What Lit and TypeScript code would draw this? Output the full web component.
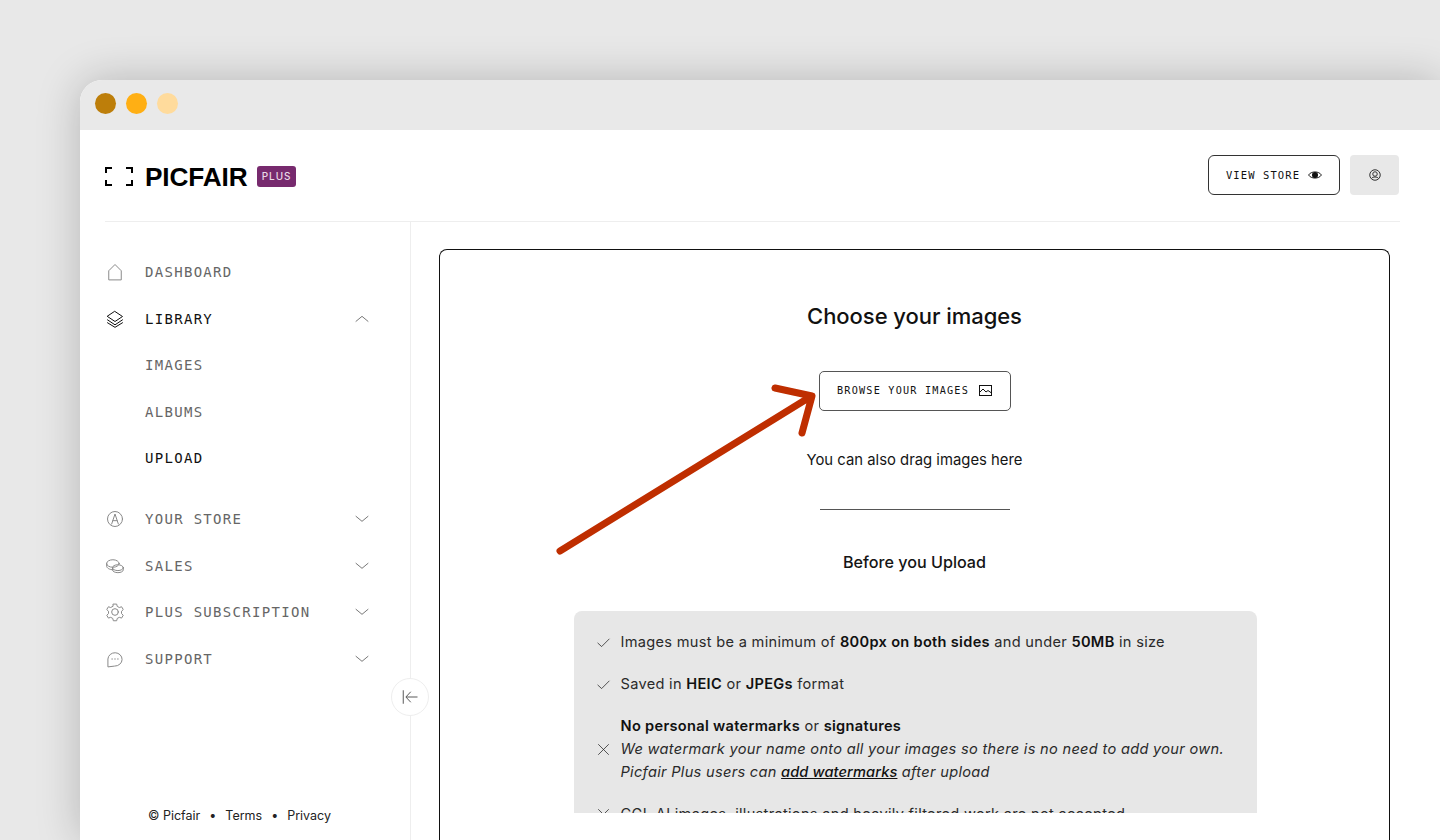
import { LitElement, html, css, svg } from "lit";
import { customElement } from "lit/decorators.js";

const ic = (body: unknown, size = 20, vb = 24) => html`<svg width=${size} height=${size} viewBox="0 0 ${vb} ${vb}" fill="none" stroke="currentColor" stroke-width="1.2" stroke-linecap="round" stroke-linejoin="round">${body}</svg>`;

const chevDown = ic(svg`<path d="M3 8 L12 15.500 L21 8"/>`, 16);
const chevUp = ic(svg`<path d="M3 15.500 L12 8 L21 15.500"/>`, 16);
const home = ic(svg`<path d="M4.500 21 V10.500 L12 3 L19.500 10.500 V21 Z"/>`, 20);
const layers = ic(svg`<path d="M12 3 L21 9 L12 15 L3 9 Z"/><path d="M3 13 L12 19 L21 13"/><path d="M3 16.500 L12 22 L21 16.500" />`, 20);
const store = ic(svg`<circle cx="12" cy="12" r="9"/><path d="M8 18 L12 6 L16 18"/><path d="M9.500 14 H14.500"/>`, 20);
const coins = ic(svg`<ellipse cx="9.500" cy="9" rx="7.500" ry="4.500"/><path d="M2 9 v3 c0 2.500 3.500 4.500 7.500 4.500"/><ellipse cx="15.500" cy="14" rx="6.500" ry="3.500"/><path d="M9 14 v2.500 c0 2 3 3.500 6.500 3.500 s6.500-1.500 6.500-3.500 V14"/>`, 20);
const gear = ic(svg`<circle cx="12" cy="12" r="4"/><path d="M10 2.500 h4 l.7 2.800 2.500 1.300 2.700-.9 2 3.400-2.100 2 v2.800 l2.100 2-2 3.400-2.700-.9-2.500 1.300-.7 2.800 h-4 l-.7-2.800-2.500-1.300-2.700.9-2-3.400 2.100-2 v-2.800 l-2.100-2 2-3.400 2.700.9 2.500-1.300 Z"/>`, 20);
const chat = ic(svg`<path d="M3.500 21 V12 a8.500 8 0 1 1 8.500 8.500 Z"/><path d="M8.500 12 h.01 M12 12 h.01 M15.500 12 h.01" stroke-width="1.600"/>`, 20);
const check = ic(svg`<path d="M3 13 L9 18.500 L21 6.500"/>`, 15);
const cross = ic(svg`<path d="M4 4 L20 20 M20 4 L4 20"/>`, 15);

interface NavItem { label: string; icon?: unknown; chev?: unknown; tone?: "on" | "off"; gap?: boolean; }

const NAV: NavItem[] = [
  { label: "DASHBOARD", icon: home },
  { label: "LIBRARY", icon: layers, chev: chevUp, tone: "on" },
  { label: "IMAGES" },
  { label: "ALBUMS" },
  { label: "UPLOAD", tone: "on" },
  { label: "YOUR STORE", icon: store, chev: chevDown, gap: true },
  { label: "SALES", icon: coins, chev: chevDown },
  { label: "PLUS SUBSCRIPTION", icon: gear, chev: chevDown },
  { label: "SUPPORT", icon: chat, chev: chevDown },
];

@customElement("app-root")
export class AppRoot extends LitElement {
  static styles = css`
    :host { display: block; width: 1440px; height: 840px; overflow: hidden; background: #e8e8e8; position: relative; font-family: "Inter", "Liberation Sans", sans-serif; color: #151515; }
    .stage { padding: 80px 0 0 80px; height: 840px; box-sizing: border-box; }
    .win { width: 1360px; height: 760px; background: #fff; border-radius: 22px 0 0 0; box-shadow: 0 0 44px rgba(0,0,0,.22); display: flex; flex-direction: column; overflow: hidden; }
    .bar { height: 50px; flex: none; background: #e9e9e9; display: flex; align-items: center; gap: 10px; padding: 0 0 3px 15px; box-sizing: border-box; }
    .dot { width: 21px; height: 21px; border-radius: 50%; }
    .d1 { background: #bd7e0a; } .d2 { background: #ffaf14; } .d3 { background: #ffdb9c; }
    .page { flex: 1; min-height: 0; padding: 0 40px 0 25px; display: flex; flex-direction: column; }
    header { height: 92px; flex: none; box-sizing: border-box; border-bottom: 1px solid #eeeeee; display: flex; align-items: center; }
    .logo { display: flex; align-items: center; margin-top: 3px; }
    .mark { display: block; margin-right: 12px; }
    .word { font: 700 26.200px/1 "Liberation Sans", sans-serif; color: #000; letter-spacing: -.1px; }
    .badge { margin-left: 9.500px; background: #772a6e; color: #e9d9e6; font: 500 10px/21px "Inter", sans-serif; letter-spacing: 1px; width: 39px; text-align: center; border-radius: 3px; }
    .tools { margin-left: auto; display: flex; gap: 10px; margin-right: 1px; margin-top: -2px; }
    .btn { font-family: "DejaVu Sans Mono", monospace; background: #fff; border: 1px solid #333; border-radius: 6px; display: flex; align-items: center; justify-content: center; box-sizing: border-box; color: #111; }
    .view { width: 132px; height: 40px; font-size: 10.500px; letter-spacing: 1.100px; gap: 8px; }
    .user { width: 49px; height: 40px; background: #e8e8e8; border-radius: 4px; display: flex; align-items: center; justify-content: center; color: #333; }
    .body { flex: 1; min-height: 0; display: flex; }
    aside { width: 306px; flex: none; box-sizing: border-box; border-right: 1px solid #eeeeee; padding-top: 27.200px; position: relative; display: flex; flex-direction: column; }
    .row { height: 46.500px; display: flex; align-items: center; color: #666; font: 400 14px/1 "DejaVu Sans Mono", monospace; letter-spacing: 1.300px; }
    .row.gap { margin-top: 14.500px; }
    .row.on { color: #111; }
    .ico { width: 40px; flex: none; display: flex; align-items: center; color: #8a8a8a; }
    .row.on .ico { color: #111; }
    .chev { margin-left: auto; margin-right: 40px; display: flex; color: #555; }
    .foot { margin-top: auto; margin-bottom: 14px; display: flex; justify-content: center; align-items: center; gap: 9px; font-size: 12.500px; line-height: 20px; color: #222; padding-right: 36px; }
    .collapse { position: absolute; right: -19px; top: 456px; width: 38px; height: 38px; border: 1px solid #eeeeee; background: #fff; border-radius: 50%; box-sizing: border-box; display: flex; align-items: center; justify-content: center; color: #555; }
    main { flex: 1; min-width: 0; padding: 27px 10px 0 28px; }
    .card { border: 1px solid #111; border-bottom: none; border-radius: 8px 8px 0 0; height: 100%; box-sizing: border-box; padding-top: 49px; display: flex; flex-direction: column; align-items: center; }
    h1 { margin: 0; font-size: 22px; line-height: 34px; font-weight: 500; letter-spacing: -.05px; color: #111; }
    .browse { margin-top: 38px; width: 192px; height: 39.500px; font-size: 10.200px; letter-spacing: 1.200px; gap: 10px; border-radius: 5px; border-color: #555; }
    .drag { margin: 38.500px 0 0; font-size: 14.850px; line-height: 22px; }
    .rule { margin-top: 38px; width: 190px; height: 1px; background: #555; }
    h2 { margin: 40px 0 0; font-size: 16.150px; line-height: 24px; font-weight: 500; }
    .rules { margin: 37px 0 0 1px; width: 683px; height: 202px; flex: none; overflow: hidden; background: #e7e7e7; border-radius: 8px 8px 0 0; box-sizing: border-box; padding: 20px 0 0 22px; font-size: 14.600px; letter-spacing: .3px; line-height: 23px; color: #2a2a2a; }
    .li { display: flex; align-items: center; margin-bottom: 19px; }
    .li .mk { width: 25px; flex: none; display: flex; color: #222; }
    .li b { font-weight: 600; color: #111; }
    .li a { color: #111; text-decoration: underline; font-weight: 500; letter-spacing: .1px; }
    .arrow { position: absolute; left: 550px; top: 375px; pointer-events: none; }
  `;

  render() {
    return html`
      <div class="stage">
        <div class="win">
          <div class="bar"><span class="dot d1"></span><span class="dot d2"></span><span class="dot d3"></span></div>
          <div class="page">
            <header>
              <div class="logo">
                <svg class="mark" width="28" height="19" viewBox="0 0 28 19" fill="none" stroke="#000" stroke-width="2"><path d="M1 6 V1 H7 M21 1 H27 V6 M27 13 V18 H21 M7 18 H1 V13"/></svg>
                <span class="word">PICFAIR</span>
                <span class="badge">PLUS</span>
              </div>
              <div class="tools">
                <div class="btn view">VIEW STORE
                  <svg width="14" height="14" viewBox="0 0 24 24" fill="none" stroke="#111" stroke-width="1.600"><path d="M1 12 C5 5 19 5 23 12 C19 19 5 19 1 12 Z"/><circle cx="12" cy="12" r="4.500" fill="#111"/></svg>
                </div>
                <div class="user"><svg width="12" height="12" viewBox="0 0 24 24" fill="none" stroke="#333" stroke-width="2"><circle cx="12" cy="12" r="10.500"/><circle cx="12" cy="10" r="4.500"/><path d="M5 19 C7 15 17 15 19 19"/></svg></div>
              </div>
            </header>
            <div class="body">
              <aside>
                ${NAV.map((n) => html`
                  <div class="row ${n.tone === "on" ? "on" : ""} ${n.gap ? "gap" : ""}">
                    <span class="ico">${n.icon ?? ""}</span>
                    <span>${n.label}</span>
                    ${n.chev ? html`<span class="chev">${n.chev}</span>` : ""}
                  </div>`)}
                <div class="foot"><span>© Picfair</span><span>•</span><span>Terms</span><span>•</span><span>Privacy</span></div>
                <div class="collapse">
                  <svg width="18" height="18" viewBox="0 0 24 24" fill="none" stroke="currentColor" stroke-width="1.300"><path d="M3 3 V21 M22 12 H7 M13 5 L6.500 12 L13 19"/></svg>
                </div>
              </aside>
              <main>
                <section class="card">
                  <h1>Choose your images</h1>
                  <div class="btn browse">BROWSE YOUR IMAGES
                    <svg width="13" height="11" viewBox="0 0 26 22" fill="none" stroke="#111" stroke-width="2"><rect x="1" y="1" width="24" height="20"/><path d="M1 15 L8 8 L14 14 L18 11 L25 16"/></svg>
                  </div>
                  <p class="drag">You can also drag images here</p>
                  <div class="rule"></div>
                  <h2>Before you Upload</h2>
                  <div class="rules">
                    <div class="li"><span class="mk">${check}</span><span>Images must be a minimum of <b>800px on both sides</b> and under <b>50MB</b> in size</span></div>
                    <div class="li"><span class="mk">${check}</span><span>Saved in <b>HEIC</b> or <b>JPEGs</b> format</span></div>
                    <div class="li"><span class="mk">${cross}</span><span><b>No personal watermarks</b> or <b>signatures</b><br><i>We watermark your name onto all your images so there is no need to add your own.<br>Picfair Plus users can <a>add watermarks</a> after upload</i></span></div>
                    <div class="li"><span class="mk">${cross}</span><span>CGI, AI images, illustrations and heavily filtered work are not accepted</span></div>
                  </div>
                </section>
              </main>
            </div>
          </div>
        </div>
      </div>
      <svg class="arrow" width="280" height="190" viewBox="550 375 280 190" fill="none" stroke="#bf2e00" stroke-width="7" stroke-linecap="round" stroke-linejoin="round"><path d="M560 551 L810 397 M775 388 L812 396 L802 433"/></svg>
    `;
  }
}
